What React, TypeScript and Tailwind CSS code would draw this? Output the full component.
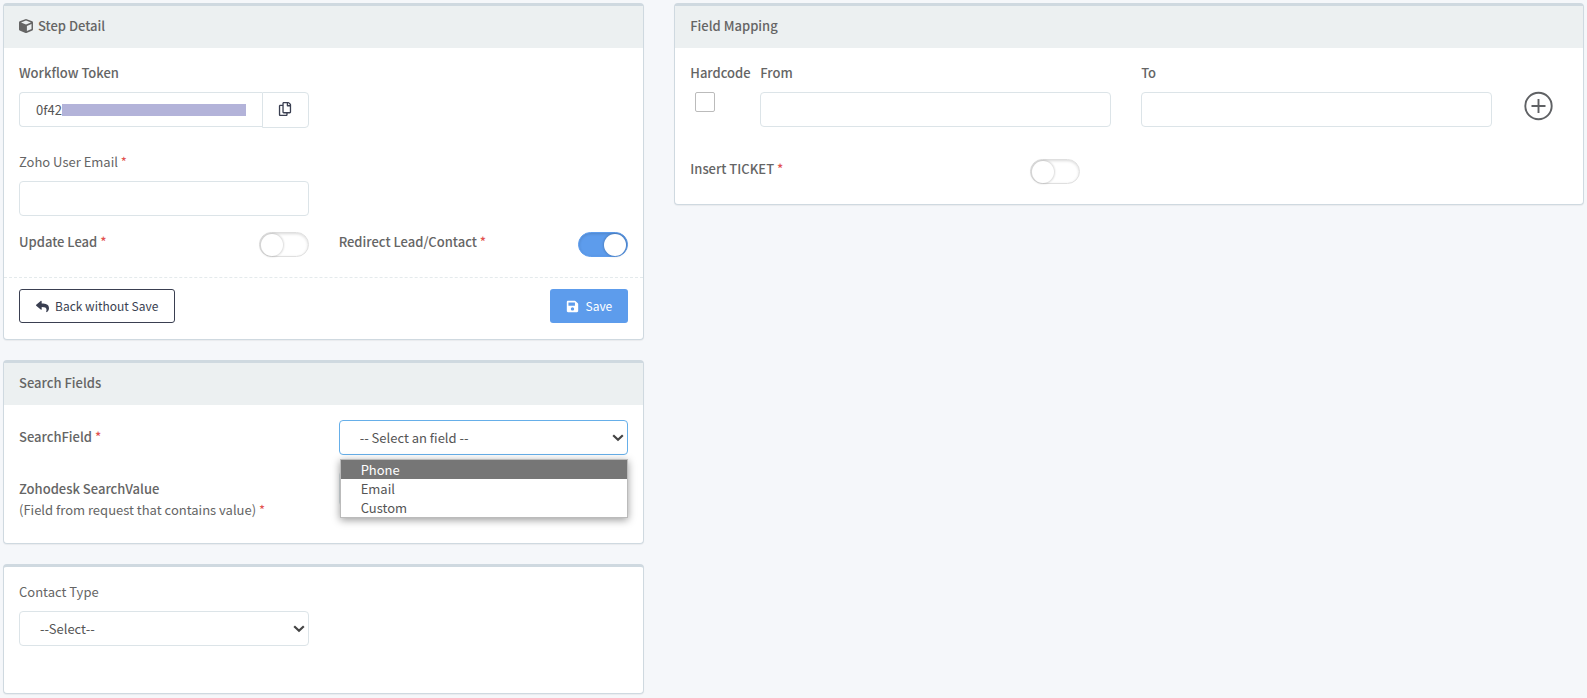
import React from "react";
import { FaReply, FaSave, FaRegCopy } from "react-icons/fa";

const inputClass =
  "block h-[35px] w-full rounded border border-[#dce4e8] bg-white px-4 text-[13px] text-[#555] outline-none";
const labelClass = "block text-[13px] leading-5 font-medium";

const Star = () => <span className="text-[#e2524f]">*</span>;

const CubeIcon = () => (
  <svg viewBox="0 0 14 14" className="mr-[5px] size-[14px]" fill="currentColor" fillRule="evenodd">
    <path d="M7 0 13.300 2.300Q14 2.600 14 3.400V10.500Q14 11.200 13.400 11.500L7.500 13.900Q7 14.100 6.500 13.900L.6 11.500Q0 11.200 0 10.500V3.400Q0 2.600.7 2.300ZM7 1.500 2 3.400 7 5.400 12 3.400ZM7.900 7V11.900L12.500 10V5.100Z" />
  </svg>
);

interface CardProps {
  title?: React.ReactNode;
  children: React.ReactNode;
}

const Card: React.FC<CardProps> = ({ title, children }) => (
  <section className="rounded border border-t-3 border-[#cfd9e0] bg-white shadow-[0_1px_1px_rgba(0,0,0,0.05)]">
    {title && (
      <h2 className="flex items-center bg-[#ecf0f1] px-[15px] pt-[10px] pb-3 text-[13px] leading-5 font-medium">
        {title}
      </h2>
    )}
    {children}
  </section>
);

interface ToggleProps {
  id: string;
  defaultChecked?: boolean;
}

const Toggle: React.FC<ToggleProps> = ({ id, defaultChecked }) => (
  <label htmlFor={id} className="flex h-[25px] w-[50px] shrink-0 cursor-pointer">
    <input id={id} type="checkbox" defaultChecked={defaultChecked} className="peer sr-only" />
    <span className="flex w-full items-center rounded-full border border-[#dfdfdf] px-px shadow-[inset_0_1px_3px_rgba(0,0,0,0.15)] peer-checked:justify-end peer-checked:border-[#5d9cec] peer-checked:bg-[#5d9cec]">
      <span className="size-[22px] rounded-full bg-white shadow-[0_0_2px_1px_rgba(0,0,0,0.15)]" />
    </span>
  </label>
);

const Chevron = () => (
  <svg
    viewBox="0 0 12 8"
    className="pointer-events-none col-start-1 row-start-1 mr-1 h-2 w-3 self-center justify-self-end"
    fill="none"
    stroke="#444"
    strokeWidth="2.2"
  >
    <path d="M1.2 1.2 6 5.8 10.800 1.2" />
  </svg>
);

const App: React.FC = () => {
  return (
    <main className="min-h-screen bg-[#f5f7fa] p-[3px] font-['Noto_Sans_CJK_SC',sans-serif] text-[13px] leading-5 text-[#656565]">
      <div className="grid grid-cols-12 items-start gap-[30px]">
        <div className="col-span-5 flex flex-col gap-5">
          <Card
            title={
              <>
                <CubeIcon />
                Step Detail
              </>
            }
          >
            <div className="px-[15px] pt-[15px] pb-5">
              <div className="grid grid-cols-2 gap-x-[30px]">
                <div>
                  <label htmlFor="token" className={labelClass}>Workflow Token</label>
                  <div className="mt-[9px] flex items-start">
                    <div className="grid h-[35px] flex-1 items-center rounded-l border border-r-0 border-[#dce4e8]">
                      <input
                        id="token"
                        readOnly
                        defaultValue="0f42"
                        className="col-start-1 row-start-1 w-full min-w-0 px-4 text-[13px] text-[#555] outline-none"
                      />
                      <span className="col-start-1 row-start-1 mr-4 ml-[42px] h-3 bg-[#b3b3d9]" />
                    </div>
                    <button
                      type="button"
                      aria-label="Copy token"
                      className="flex h-9 w-[47px] items-center justify-center rounded-r border border-[#dce4e8] pb-[2px] text-[#3a3f51]"
                    >
                      <FaRegCopy className="size-[14px]" />
                    </button>
                  </div>
                  <label htmlFor="email" className="mt-6 block">
                    Zoho User Email <Star />
                  </label>
                  <input id="email" type="email" className={`${inputClass} mt-[9px]`} />
                </div>
              </div>
              <div className="mt-4 grid grid-cols-2 gap-x-[30px]">
                <div className="flex justify-between">
                  <label htmlFor="update" className={labelClass}>Update Lead <Star /></label>
                  <Toggle id="update" />
                </div>
                <div className="flex justify-between">
                  <label htmlFor="redirect" className={labelClass}>Redirect Lead/Contact <Star /></label>
                  <Toggle id="redirect" defaultChecked />
                </div>
              </div>
            </div>
            <div className="flex justify-between border-t border-dashed border-[#e4eaec] px-[15px] pt-[11px] pb-4">
              <button
                type="button"
                className="flex h-[34px] items-center gap-[6px] rounded-[3px] border border-[#3a3f51] px-4 text-xs text-[#3a3f51]"
              >
                <FaReply className="size-[13px]" />
                Back without Save
              </button>
              <button
                type="button"
                className="flex h-[34px] items-center gap-[6px] rounded-[3px] bg-[#5d9cec] px-4 text-xs text-white"
              >
                <FaSave className="size-[13px]" />
                Save
              </button>
            </div>
          </Card>

          <Card title="Search Fields">
            <div className="grid grid-cols-2 gap-x-[30px] gap-y-4 px-[15px] pt-[15px] pb-[23px]">
              <label htmlFor="searchField" className={`${labelClass} pt-[7px]`}>SearchField <Star /></label>
              <div className="relative grid">
                <select
                  id="searchField"
                  className="col-start-1 row-start-1 h-[35px] w-full appearance-none rounded border border-[#66afe9] bg-white pl-5 text-[13px] text-[#555] outline-none"
                >
                  <option>-- Select an field --</option>
                  <option>Phone</option>
                  <option>Email</option>
                  <option>Custom</option>
                </select>
                <Chevron />
                <ul className="absolute top-[39px] right-0 left-px z-10 border border-[#bbb] bg-white text-[13px] leading-[19px] text-[#555] shadow-[0_2px_8px_rgba(0,0,0,0.4)]">
                  <li className="bg-[#767676] pl-5 text-white">Phone</li>
                  <li className="pl-5">Email</li>
                  <li className="pl-5">Custom</li>
                </ul>
              </div>
              <label htmlFor="searchValue" className="pt-[7px] leading-[21px]">
                <span className="block font-medium">Zohodesk SearchValue</span>
                (Field from request that contains value) <Star />
              </label>
              <input id="searchValue" type="text" className={inputClass} />
            </div>
          </Card>

          <Card>
            <div className="grid grid-cols-2 gap-x-[30px] px-[15px] pt-[15px] pb-[47px]">
              <div>
                <label htmlFor="contactType" className="block">Contact Type</label>
                <div className="mt-[9px] grid">
                  <select
                    id="contactType"
                    className="col-start-1 row-start-1 h-[35px] w-full appearance-none rounded border border-[#dce4e8] bg-white pl-5 text-[13px] text-[#555] outline-none"
                  >
                    <option>--Select--</option>
                  </select>
                  <Chevron />
                </div>
              </div>
            </div>
          </Card>
        </div>

        <div className="col-span-7">
          <Card title="Field Mapping">
            <div className="px-[15px] pt-[15px] pb-5">
              <div className="flex">
                <div className="w-[70px]">
                  <label htmlFor="hardcode" className={labelClass}>Hardcode</label>
                  <input
                    id="hardcode"
                    type="checkbox"
                    className="mt-[9px] ml-[5px] block size-5 appearance-none rounded-xs border border-[#bbb] bg-white"
                  />
                </div>
                <div className="flex-1">
                  <label htmlFor="from" className={labelClass}>From</label>
                  <input id="from" type="text" className={`${inputClass} mt-[9px]`} />
                </div>
                <div className="ml-[30px] flex-1">
                  <label htmlFor="to" className={labelClass}>To</label>
                  <input id="to" type="text" className={`${inputClass} mt-[9px]`} />
                </div>
                <button type="button" aria-label="Add mapping" className="mt-7 ml-8 flex w-11 items-start">
                  <svg viewBox="0 0 30 30" className="size-[30px]" fill="none" stroke="#5f6164" strokeWidth="1.9">
                    <circle cx="14.5" cy="15" r="13.2" />
                    <path d="M14.5 8v14M7.5 15h14" />
                  </svg>
                </button>
              </div>
              <div className="mt-8 flex w-4/9 justify-between">
                <label htmlFor="insertTicket" className={labelClass}>Insert TICKET <Star /></label>
                <Toggle id="insertTicket" />
              </div>
            </div>
          </Card>
        </div>
      </div>
    </main>
  );
};

export default App;
